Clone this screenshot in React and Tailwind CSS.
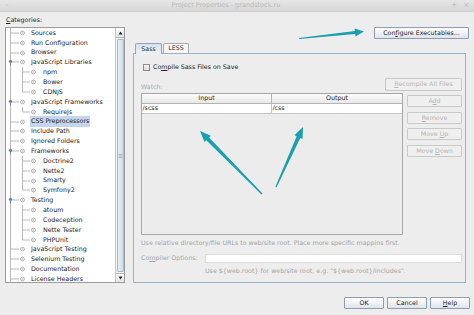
import React from "react";

const tree = [
  { t: "Sources", l: 0 },
  { t: "Run Configuration", l: 0 },
  { t: "Browser", l: 0 },
  { t: "JavaScript Libraries", l: 0, exp: true },
  { t: "npm", l: 1 },
  { t: "Bower", l: 1 },
  { t: "CDNJS", l: 1, last: true },
  { t: "JavaScript Frameworks", l: 0, exp: true },
  { t: "RequireJs", l: 1, last: true },
  { t: "CSS Preprocessors", l: 0, sel: true },
  { t: "Include Path", l: 0 },
  { t: "Ignored Folders", l: 0 },
  { t: "Frameworks", l: 0, exp: true },
  { t: "Doctrine2", l: 1 },
  { t: "Nette2", l: 1 },
  { t: "Smarty", l: 1 },
  { t: "Symfony2", l: 1, last: true },
  { t: "Testing", l: 0, exp: true },
  { t: "atoum", l: 1 },
  { t: "Codeception", l: 1 },
  { t: "Nette Tester", l: 1 },
  { t: "PHPUnit", l: 1, last: true },
  { t: "JavaScript Testing", l: 0 },
  { t: "Selenium Testing", l: 0 },
  { t: "Documentation", l: 0 },
  { t: "License Headers", l: 0 },
];

const LINE = "#a9a9a9";

function NodeIcon({ cx }) {
  return (
    <g>
      <circle cx={cx} cy={5} r={1.9} fill="#fff" stroke="#9a9a9a" strokeWidth="0.8" />
      <circle cx={cx} cy={5} r={0.7} fill="#b0b0b0" />
    </g>
  );
}

function Guide({ item }) {
  if (item.l === 0) {
    return (
      <svg width="24" height="10" className="shrink-0">
        <line x1="4.5" y1="0" x2="4.5" y2="10" stroke={LINE} strokeWidth="0.8" />
        <line x1="4.5" y1="5" x2="13" y2="5" stroke={LINE} strokeWidth="0.8" />
        {item.exp && (
          <g>
            <line x1="4.5" y1="5" x2="4.5" y2="8.5" stroke="#6f7f95" strokeWidth="0.9" />
            <circle cx="4.5" cy="4.3" r="1.6" fill="#6f7f95" />
          </g>
        )}
        <NodeIcon cx={16.5} />
      </svg>
    );
  }
  return (
    <svg width="36" height="10" className="shrink-0">
      <line x1="4.5" y1="0" x2="4.5" y2="10" stroke={LINE} strokeWidth="0.8" />
      <line x1="16.5" y1="0" x2="16.5" y2={item.last ? 5 : 10} stroke={LINE} strokeWidth="0.8" />
      <line x1="16.5" y1="5" x2="24" y2="5" stroke={LINE} strokeWidth="0.8" />
      <NodeIcon cx={27.5} />
    </svg>
  );
}

function arrowPts(x1, y1, x2, y2, headLen, headW, shaftW, tailW) {
  const dx = x2 - x1, dy = y2 - y1;
  const len = Math.hypot(dx, dy);
  const ux = dx / len, uy = dy / len;
  const nx = -uy, ny = ux;
  const bx = x2 - ux * headLen, by = y2 - uy * headLen;
  const p = [
    [x1 + nx * tailW, y1 + ny * tailW],
    [bx + nx * shaftW, by + ny * shaftW],
    [bx + nx * headW, by + ny * headW],
    [x2, y2],
    [bx - nx * headW, by - ny * headW],
    [bx - nx * shaftW, by - ny * shaftW],
    [x1 - nx * tailW, y1 - ny * tailW],
  ];
  return p.map((q) => q[0].toFixed(1) + "," + q[1].toFixed(1)).join(" ");
}

const btn =
  "flex items-center justify-center border border-[#8e9db3] bg-gradient-to-b from-[#ffffff] to-[#dde4ec] text-[#222] rounded-[1px]";
const dbtn =
  "flex items-center justify-center border border-[#c9c9c9] bg-[#efefef] text-[#b4b4b4] rounded-[1px]";

export default function App() {
  return (
    <div
      className="relative w-[474px] h-[315px] overflow-hidden bg-[#ededed] text-[6.3px] leading-none text-[#222]"
      style={{ fontFamily: "'DejaVu Sans', sans-serif" }}
    >
      {/* title bar */}
      <div className="h-[12px] flex items-center justify-between px-[5px] bg-gradient-to-b from-[#e6e6e6] to-[#d6d6d6] border-b border-[#cfcfcf] text-[#b9b9b9]">
        <span className="text-[7px]">–</span>
        <span className="text-[6.5px] mr-[8px]">Project Properties - grandstock.ru</span>
        <span className="flex gap-[6px] text-[7px]">
          <span>+</span>
          <span>×</span>
        </span>
      </div>

      <div className="flex pl-[5px]">
        {/* left column */}
        <div className="w-[120px] flex flex-col">
          <div className="h-[15px] flex items-center pl-[1px] pt-[1px]">
            <span><u>C</u>ategories:</span>
          </div>
          <div className="h-[256px] border border-[#9c9c9c] bg-white flex">
            <div className="flex-1 flex flex-col overflow-hidden">
              {tree.map((it, i) => (
                <div key={i} className="h-[9.85px] flex items-center shrink-0">
                  <Guide item={it} />
                  <span
                    className={
                      "whitespace-nowrap px-[1px] py-[2px] " +
                      (it.sel ? "bg-[#c5d5ea] text-[#1a1a1a]" : "")
                    }
                  >
                    {it.t}
                  </span>
                </div>
              ))}
            </div>
            <div className="w-[9px] flex flex-col border-l border-[#c6c6c6] bg-[#f3f3f3]">
              <div className="h-[10px] flex items-center justify-center border-b border-[#b8b8b8] bg-gradient-to-b from-[#ffffff] to-[#e2e2e2]">
                <svg width="5" height="4"><polygon points="2.5,0.5 4.5,3.5 0.5,3.5" fill="#222" /></svg>
              </div>
              <div className="flex-1 flex items-center justify-center mx-[0.5px] my-[1px] border border-[#a8b8cd] bg-gradient-to-r from-[#e6ecf4] to-[#d3dded] rounded-[1px]">
                <svg width="5" height="4">
                  <line x1="0.5" y1="0.5" x2="4.5" y2="0.5" stroke="#8b9ab0" strokeWidth="0.6" />
                  <line x1="0.5" y1="2" x2="4.5" y2="2" stroke="#8b9ab0" strokeWidth="0.6" />
                  <line x1="0.5" y1="3.5" x2="4.5" y2="3.5" stroke="#8b9ab0" strokeWidth="0.6" />
                </svg>
              </div>
              <div className="h-[9px] flex items-center justify-center border-t border-[#b8b8b8] bg-gradient-to-b from-[#ffffff] to-[#e2e2e2]">
                <svg width="5" height="4"><polygon points="0.5,0.5 4.5,0.5 2.5,3.5" fill="#222" /></svg>
              </div>
            </div>
          </div>
        </div>

        {/* right column */}
        <div className="ml-[8px] w-[336px] flex flex-col">
          <div className="h-[15px]" />
          <div className="flex justify-end">
            <div className={btn + " w-[95px] h-[12px]"}>
              Con<u>f</u>igure Executables...
            </div>
          </div>
          {/* tabs */}
          <div className="mt-[3px] h-[11px] flex items-end pl-[2px]">
            <div className="w-[27px] h-[11px] flex items-center justify-center border border-b-0 border-[#91a4be] rounded-t-[2px] bg-gradient-to-b from-[#d5e1ef] to-[#edf1f6] text-[#333] mb-[-1px] relative z-10">
              Sass
            </div>
            <div className="ml-[1px] w-[26px] h-[10px] flex items-center justify-center border border-b-0 border-[#a9a9a9] rounded-t-[2px] bg-[#f6f6f6] text-[#333]">
              LESS
            </div>
          </div>
          {/* panel */}
          <div className="mr-[3px] h-[230px] border border-[#9fb0c7] flex flex-col pl-[7px] pr-[3px]">
            <div className="mt-[8px] h-[11px] flex items-center">
              <div className="ml-[2px] w-[7px] h-[7px] border border-[#8e8e8e] bg-gradient-to-b from-[#f4f4f4] to-[#dcdcdc]" />
              <span className="ml-[3px]">Co<u>m</u>pile Sass Files on Save</span>
            </div>
            <div className="mt-[5px] h-[13px] flex items-end justify-between">
              <span className="text-[#a8a8a8] mb-[1px]">Watch:</span>
              <div className={dbtn + " w-[77px] h-[13px]"}>
                <span><u>R</u>ecompile All Files</span>
              </div>
            </div>
            <div className="mt-[2px] h-[142px] flex">
              <div className="w-[262px] border border-[#a6a6a6] bg-[#ececec] flex flex-col">
                <div className="h-[10px] flex border-b border-[#b4b4b4] bg-gradient-to-b from-[#fbfbfb] to-[#e9e9e9]">
                  <div className="w-[130px] border-r border-[#b4b4b4] flex items-center justify-center">Input</div>
                  <div className="flex-1 flex items-center justify-center">Output</div>
                </div>
                <div className="h-[10px] flex bg-white border-b border-[#c4c4c4]">
                  <div className="w-[130px] border-r border-[#c4c4c4] flex items-center pl-[0.5px]">/scss</div>
                  <div className="flex-1 flex items-center pl-[0.5px]">/css</div>
                </div>
              </div>
              <div className="ml-[4px] w-[55px] flex flex-col pt-[2px] gap-[4.7px]">
                <div className={dbtn + " h-[12px]"}><span>A<u>d</u>d</span></div>
                <div className={dbtn + " h-[12px]"}><span><u>R</u>emove</span></div>
                <div className={dbtn + " h-[12px]"}><span>Move <u>U</u>p</span></div>
                <div className={dbtn + " h-[12px]"}><span>Move <u>D</u>own</span></div>
              </div>
            </div>
            <div className="mt-[3px] h-[10px] flex items-center text-[#a4a4a4] whitespace-nowrap">
              Use relative directory/file URLs to web/site root. Place more specific mappins first.
            </div>
            <div className="mt-[6px] h-[9px] flex items-center">
              <span className="w-[64px] text-[#a4a4a4]">Co<u>m</u>piler Options:</span>
              <div className="flex-1 h-[9px] bg-white border border-[#dcdcdc]" />
            </div>
            <div className="mt-[3px] h-[10px] flex items-center pl-[64px] text-[#a4a4a4] whitespace-nowrap">
              Use ${"{"}web.root{"}"} for web/site root, e.g. "${"{"}web.root{"}"}/includes".
            </div>
          </div>
        </div>
      </div>

      {/* bottom buttons */}
      <div className="mt-[14px] flex justify-end pr-[4px] gap-[3px]">
        <div className={btn + " w-[40px] h-[12px] border-[#6f84a3]"}>OK</div>
        <div className={btn + " w-[40px] h-[12px]"}>Cancel</div>
        <div className={btn + " w-[40px] h-[12px]"}><span><u>H</u>elp</span></div>
      </div>

      {/* annotation arrows */}
      <svg className="absolute left-0 top-0 pointer-events-none" width="474" height="315">
        <polygon points={arrowPts(299, 38.5, 364, 31.5, 9, 4, 1.5, 0.6)} fill="#1a9fae" />
        <polygon points={arrowPts(262, 194, 200, 131, 11, 4.5, 2, 0.7)} fill="#1a9fae" />
        <polygon points={arrowPts(276, 187, 303, 127, 11, 4.5, 2, 0.7)} fill="#1a9fae" />
      </svg>
    </div>
  );
}
